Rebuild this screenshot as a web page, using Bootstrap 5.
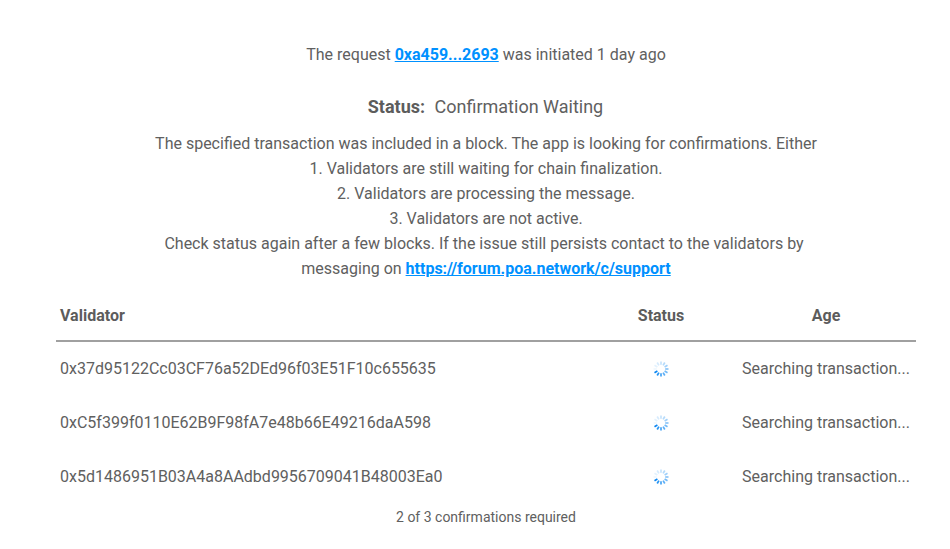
<!DOCTYPE html>
<html><head><meta charset="utf-8">
<link href="https://cdn.jsdelivr.net/npm/bootstrap@5.3.0/dist/css/bootstrap.min.css" rel="stylesheet">
<style>
html,body{background:#fff;}
body{font-family:Roboto,sans-serif;color:#606060;font-size:16px;height:549px;overflow:hidden;}
.wrap{padding:42px 34px 0 56px;}
.msg{line-height:25px;text-align:center;width:860px;}
.msg a{color:#0091ff;font-weight:700;}
.req{height:25px;margin-bottom:27px;}
.stat{font-size:18px;height:25px;margin-bottom:12px;padding-right:1px;}
.stat b{font-weight:700;margin-right:5px;color:#5c5c5c;}
.para{padding:0 90px;}
.vt{width:860px;margin-top:11px;border-collapse:separate;border-spacing:0;}
.vt th{font-weight:700;height:50px;border-bottom:2px solid #a0a0a0;padding:0 4px;color:#5c5c5c;}
.vt td{height:54px;padding:0 4px;color:#606060;}
.foot{font-size:14px;text-align:center;width:860px;margin-top:3px;line-height:20px;}
.c2{width:150px;text-align:center;}
.c3{width:180px;text-align:center;}
.spin{display:block;margin:1px auto 0;position:relative;left:-.5px;top:-.5px;}
</style></head><body>
<svg width="0" height="0" class="d-block" aria-hidden="true"><defs><symbol id="spin" viewBox="0 0 16 16"><g stroke-width="1.7" stroke-linecap="butt">
<path stroke="#0a86f2" d="M4.4 10.1L1.5 11.8"/>
<path stroke="#2694f3" d="M5.9 11.6L4.2 14.5"/>
<path stroke="#46a4f5" d="M8 12.2v3.3"/>
<path stroke="#5aaef6" d="M10.1 11.6l1.7 2.9"/>
<path stroke="#72baf7" d="M11.6 10.1l2.9 1.7"/>
<path stroke="#8ac5f8" d="M12.2 8h3.3"/>
<path stroke="#a0d0fa" d="M11.6 5.9l2.9-1.7"/>
<path stroke="#b4dafb" d="M10.1 4.4l1.7-2.9"/>
<path stroke="#c6e3fc" d="M8 3.8V.5"/>
<path stroke="#d6ebfd" d="M5.9 4.4L4.2 1.5"/>
<path stroke="#e4f2fd" d="M4.4 5.9L1.5 4.2"/>
<path stroke="#eff7fe" d="M3.8 8H.5"/>
</g></symbol></defs></svg>
<div class="wrap">
<div class="msg req">The request <a href="#">0xa459...2693</a> was initiated 1 day ago</div>
<div class="msg stat"><b>Status:</b> Confirmation Waiting</div>
<div class="msg para">The specified transaction was included in a block. The app is looking for confirmations. Either<br>1. Validators are still waiting for chain finalization.<br>2. Validators are processing the message.<br>3. Validators are not active.<br>Check status again after a few blocks. If the issue still persists contact to the validators by&nbsp;<br>messaging on <a href="#">https://forum.poa.network/c/support</a></div>
<table class="vt"><thead><tr><th>Validator</th><th class="c2">Status</th><th class="c3">Age</th></tr></thead><tbody>
<tr><td>0x37d95122Cc03CF76a52DEd96f03E51F10c655635</td><td class="c2"><svg class="spin" width="16" height="16"><use href="#spin"/></svg></td><td class="c3">Searching transaction...</td></tr>
<tr><td>0xC5f399f0110E62B9F98fA7e48b66E49216daA598</td><td class="c2"><svg class="spin" width="16" height="16"><use href="#spin"/></svg></td><td class="c3">Searching transaction...</td></tr>
<tr><td>0x5d1486951B03A4a8AAdbd9956709041B48003Ea0</td><td class="c2"><svg class="spin" width="16" height="16"><use href="#spin"/></svg></td><td class="c3">Searching transaction...</td></tr>
</tbody></table>
<div class="foot">2 of 3 confirmations required</div>
</div>
<script src="https://cdn.jsdelivr.net/npm/bootstrap@5.3.0/dist/js/bootstrap.bundle.min.js"></script>
</body></html>
